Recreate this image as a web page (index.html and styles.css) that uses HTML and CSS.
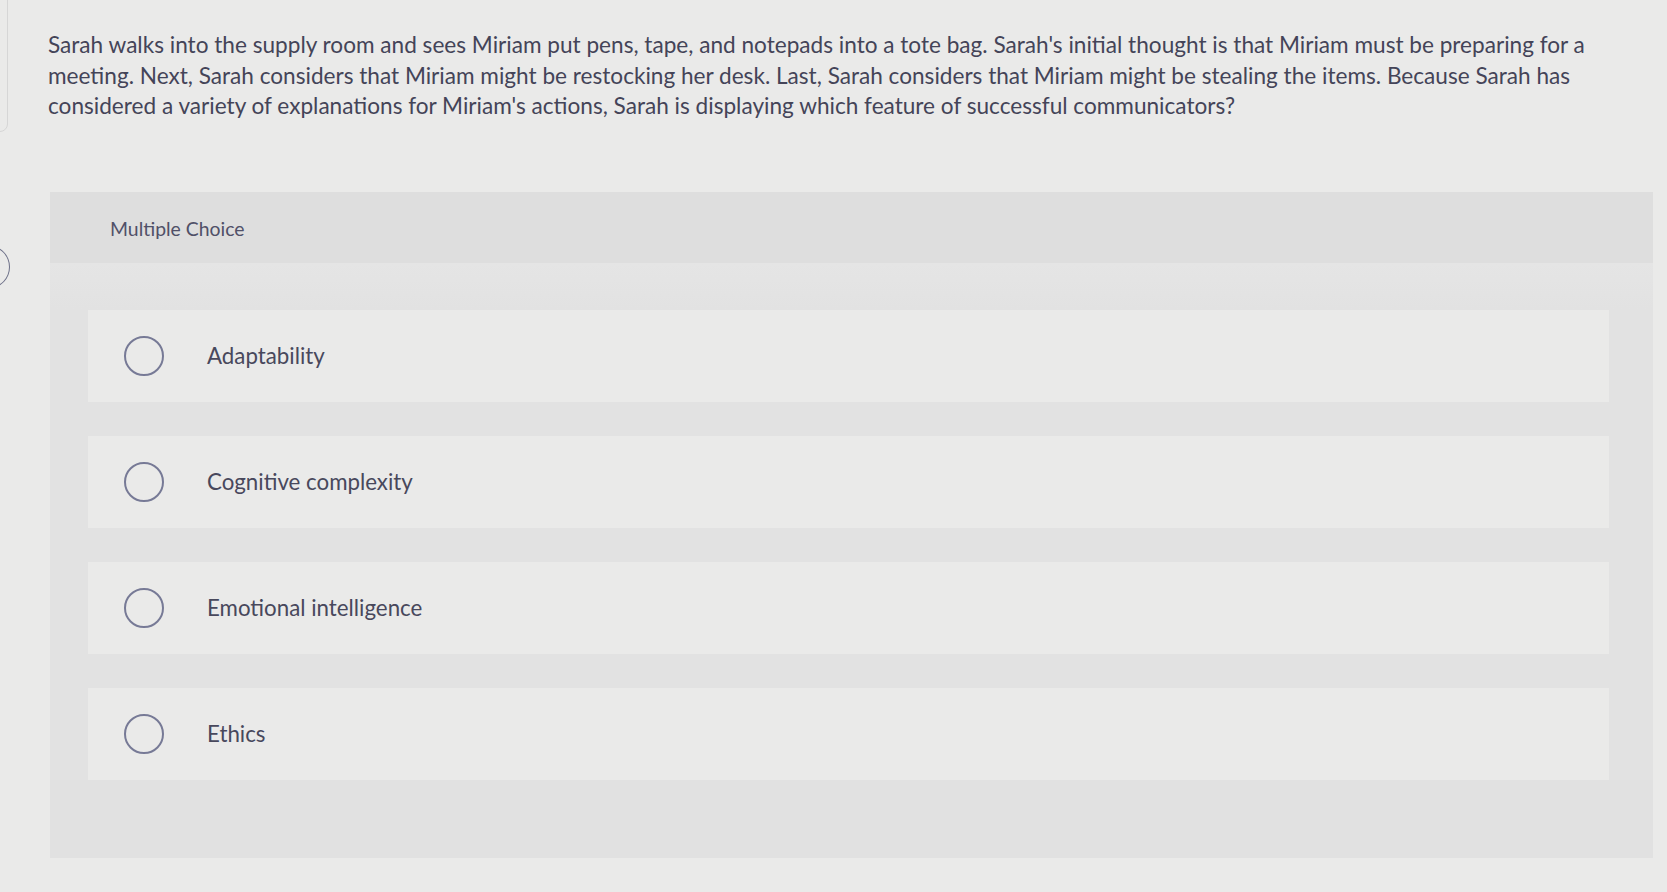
FILE: index.html
```html
<!DOCTYPE html>
<html lang="en">
<head>
<meta charset="utf-8">
<title>Multiple Choice</title>
<link rel="stylesheet" href="styles.css">
</head>
<body>
<div class="edge-card"></div>
<div class="edge-circle"></div>
<main class="page">
  <p class="question">Sarah walks into the supply room and sees Miriam put pens, tape, and notepads into a tote bag. Sarah's initial thought is that Miriam must be preparing for a meeting. Next, Sarah considers that Miriam might be restocking her desk. Last, Sarah considers that Miriam might be stealing the items. Because Sarah has considered a variety of explanations for Miriam's actions, Sarah is displaying which feature of successful communicators?</p>
  <section class="choice-box">
    <header class="choice-head">Multiple Choice</header>
    <div class="choices">
      <label class="choice"><span class="radio"></span><span class="label">Adaptability</span></label>
      <label class="choice"><span class="radio"></span><span class="label">Cognitive complexity</span></label>
      <label class="choice"><span class="radio"></span><span class="label">Emotional intelligence</span></label>
      <label class="choice"><span class="radio"></span><span class="label">Ethics</span></label>
    </div>
  </section>
</main>
</body>
</html>
```
FILE: styles.css
```css
html, body {
  margin: 0;
  padding: 0;
}
body {
  background: #eaeae9;
  font-family: Lato, "Open Sans", sans-serif;
  color: #4b4b5a;
  width: 1667px;
  height: 892px;
  overflow: hidden;
  position: relative;
}
.page {
  padding: 30px 14px 0 48px;
}
.question {
  margin: 0;
  width: 1548px;
  font-size: 22.6px;
  line-height: 30.5px;
  color: #444458;
}
.choice-box {
  margin: 70px 0 0 2px;
  width: 1603px;
  height: 666px;
  background: #e1e1e1;
  box-sizing: border-box;
}
.choice-head {
  height: 71px;
  background: #dedede;
  padding-left: 60px;
  display: flex;
  align-items: center;
  font-size: 19.4px;
  color: #505068;
  box-sizing: border-box;
  padding-top: 2px;
}
.choices {
  background: linear-gradient(#e5e5e5, #e2e2e2 47px);
  padding: 47px 44px 0 38px;
  display: flex;
  flex-direction: column;
  gap: 34px;
}
.choice {
  height: 92px;
  background: #eaeae9;
  display: flex;
  align-items: center;
  padding-left: 36px;
}
.radio {
  width: 36px;
  height: 36px;
  border: 2px solid #777a96;
  border-radius: 50%;
  flex: none;
}
.label {
  margin-left: 43px;
  font-size: 22.3px;
  color: #48485c;
}
.edge-card {
  position: absolute;
  left: -20px;
  top: -10px;
  width: 26px;
  height: 140px;
  border: 1.5px solid #d6d6d6;
  border-radius: 8px;
}
.edge-circle {
  position: absolute;
  left: -30px;
  top: 246px;
  width: 38px;
  height: 40px;
  border: 1.5px solid #6d7088;
  border-radius: 50%;
}
```
